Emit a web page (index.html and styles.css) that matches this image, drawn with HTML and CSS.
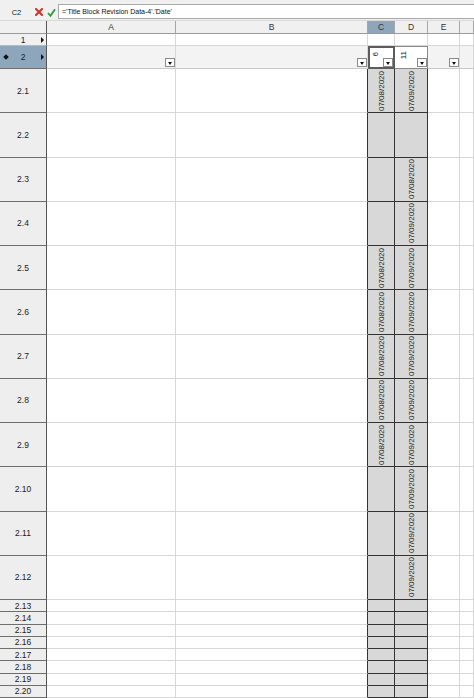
FILE: index.html
```html
<!DOCTYPE html>
<html>
<head>
<meta charset="utf-8">
<link rel="stylesheet" href="styles.css">
</head>
<body>
<div class="topbar">
  <div class="namebox">C2</div>
  <svg class="ico ico-x" width="8" height="8" viewBox="0 0 8 8"><path d="M1 1L7 7M7 1L1 7" stroke="#d4312a" stroke-width="2" stroke-linecap="square"/></svg>
  <svg class="ico ico-ok" width="9" height="9" viewBox="0 0 9 9"><path d="M1 5L3.5 7.8L8 1.2" fill="none" stroke="#2f9a3a" stroke-width="1.8"/></svg>
  <div class="formula">='Title Block Revision Data-4'.'Date'</div>
</div>
<div class="sheet">
  <div class="row hdr">
    <div class="rh corner"></div>
    <div class="ch">A</div><div class="ch">B</div><div class="ch sel">C</div><div class="ch">D</div><div class="ch">E</div><div class="ch"></div>
  </div>
  <div class="row r1">
    <div class="rh rh-top"><span></span><span class="n">1</span><span class="tri"></span></div>
    <div class="c"></div><div class="c"></div><div class="c"></div><div class="c"></div><div class="c"></div><div class="c"></div>
  </div>
  <div class="row r2">
    <div class="rh rh-top rh-sel"><span class="dot"></span><span class="n">2</span><span class="tri"></span></div>
    <div class="c fc"><span class="dd"></span></div>
    <div class="c fc"><span class="dd"></span></div>
    <div class="c fc c2"><span class="vt">6</span><span class="dd"></span></div>
    <div class="c fc d2"><span class="vt">11</span><span class="dd"></span></div>
    <div class="c fc"><span class="dd"></span></div>
    <div class="c fc"></div>
  </div>

  <div class="row big"><div class="rh rh-lbl">2.1</div><div class="c"></div><div class="c bk"></div><div class="c k"><span class="vt">07/08/2020</span></div><div class="c k"><span class="vt">07/09/2020</span></div><div class="c"></div><div class="c"></div></div>
  <div class="row big"><div class="rh rh-lbl">2.2</div><div class="c"></div><div class="c bk"></div><div class="c k"></div><div class="c k"></div><div class="c"></div><div class="c"></div></div>
  <div class="row big"><div class="rh rh-lbl">2.3</div><div class="c"></div><div class="c bk"></div><div class="c k"></div><div class="c k"><span class="vt">07/08/2020</span></div><div class="c"></div><div class="c"></div></div>
  <div class="row big"><div class="rh rh-lbl">2.4</div><div class="c"></div><div class="c bk"></div><div class="c k"></div><div class="c k"><span class="vt">07/09/2020</span></div><div class="c"></div><div class="c"></div></div>
  <div class="row big"><div class="rh rh-lbl">2.5</div><div class="c"></div><div class="c bk"></div><div class="c k"><span class="vt">07/08/2020</span></div><div class="c k"><span class="vt">07/09/2020</span></div><div class="c"></div><div class="c"></div></div>
  <div class="row big"><div class="rh rh-lbl">2.6</div><div class="c"></div><div class="c bk"></div><div class="c k"><span class="vt">07/08/2020</span></div><div class="c k"><span class="vt">07/09/2020</span></div><div class="c"></div><div class="c"></div></div>
  <div class="row big"><div class="rh rh-lbl">2.7</div><div class="c"></div><div class="c bk"></div><div class="c k"><span class="vt">07/08/2020</span></div><div class="c k"><span class="vt">07/09/2020</span></div><div class="c"></div><div class="c"></div></div>
  <div class="row big"><div class="rh rh-lbl">2.8</div><div class="c"></div><div class="c bk"></div><div class="c k"><span class="vt">07/08/2020</span></div><div class="c k"><span class="vt">07/09/2020</span></div><div class="c"></div><div class="c"></div></div>
  <div class="row big"><div class="rh rh-lbl">2.9</div><div class="c"></div><div class="c bk"></div><div class="c k"><span class="vt">07/08/2020</span></div><div class="c k"><span class="vt">07/09/2020</span></div><div class="c"></div><div class="c"></div></div>
  <div class="row big"><div class="rh rh-lbl">2.10</div><div class="c"></div><div class="c bk"></div><div class="c k"></div><div class="c k"><span class="vt">07/09/2020</span></div><div class="c"></div><div class="c"></div></div>
  <div class="row big"><div class="rh rh-lbl">2.11</div><div class="c"></div><div class="c bk"></div><div class="c k"></div><div class="c k"><span class="vt">07/09/2020</span></div><div class="c"></div><div class="c"></div></div>
  <div class="row big"><div class="rh rh-lbl">2.12</div><div class="c"></div><div class="c bk"></div><div class="c k"></div><div class="c k"><span class="vt">07/09/2020</span></div><div class="c"></div><div class="c"></div></div>

  <div class="row small"><div class="rh rh-lbl">2.13</div><div class="c"></div><div class="c bk"></div><div class="c k"></div><div class="c k"></div><div class="c"></div><div class="c"></div></div>
  <div class="row small"><div class="rh rh-lbl">2.14</div><div class="c"></div><div class="c bk"></div><div class="c k"></div><div class="c k"></div><div class="c"></div><div class="c"></div></div>
  <div class="row small"><div class="rh rh-lbl">2.15</div><div class="c"></div><div class="c bk"></div><div class="c k"></div><div class="c k"></div><div class="c"></div><div class="c"></div></div>
  <div class="row small"><div class="rh rh-lbl">2.16</div><div class="c"></div><div class="c bk"></div><div class="c k"></div><div class="c k"></div><div class="c"></div><div class="c"></div></div>
  <div class="row small"><div class="rh rh-lbl">2.17</div><div class="c"></div><div class="c bk"></div><div class="c k"></div><div class="c k"></div><div class="c"></div><div class="c"></div></div>
  <div class="row small"><div class="rh rh-lbl">2.18</div><div class="c"></div><div class="c bk"></div><div class="c k"></div><div class="c k"></div><div class="c"></div><div class="c"></div></div>
  <div class="row small"><div class="rh rh-lbl">2.19</div><div class="c"></div><div class="c bk"></div><div class="c k"></div><div class="c k"></div><div class="c"></div><div class="c"></div></div>
  <div class="row small"><div class="rh rh-lbl">2.20</div><div class="c"></div><div class="c bk"></div><div class="c k"></div><div class="c k"></div><div class="c"></div><div class="c"></div></div>
</div>
</body>
</html>
```

FILE: styles.css
```css
* { box-sizing: border-box; margin: 0; padding: 0; }
html, body { width: 474px; height: 698px; overflow: hidden; background: #fff; }
body { font-family: "Liberation Sans", Arial, sans-serif; color: #222; }

.topbar {
  display: flex;
  align-items: center;
  height: 21px;
  padding: 4px 0 1px;
  background: #f0f0f0;
  border-bottom: 1px solid #d9d9d9;
}
.namebox { width: 33px; text-align: center; font-size: 7.5px; color: #222; margin-top: 1px; }
.ico { flex: none; margin-top: 1px; }
.ico-x { margin-left: 2px; }
.ico-ok { margin-left: 4px; }
.formula {
  flex: 1;
  margin-left: 2px;
  height: 15px;
  background: #fff;
  border: 1px solid #a9a9a9;
  border-right: 0;
  font-size: 7px;
  line-height: 13px;
  padding-left: 3px;
  color: #111;
  white-space: nowrap;
}

.row {
  display: grid;
  grid-template-columns: 47px 129px 192px 27px 33px 32px 1fr;
}
.hdr { height: 13px; }
.r1 { height: 12px; }
.r2 { height: 23px; }
.big { height: 44.25px; }
.small { height: 12.25px; }

.rh {
  background: #eeeeee;
  border-right: 1px solid #555;
  border-bottom: 1px solid #6e6e6e;
  font-size: 8.5px;
  color: #222;
}
.corner { background: #f0f0f0; border-bottom-color: #9a9a9a; }
.rh-top {
  display: grid;
  grid-template-columns: 10px 1fr 10px;
  align-items: center;
  background: #f0f0f0;
  border-bottom-color: #b8b8b8;
}
.rh-top .n { text-align: center; }
.rh-sel { background: #8ea6bb; border-bottom-color: #6e6e6e; }
.tri {
  justify-self: end;
  margin-right: 2px;
  width: 0; height: 0;
  border-left: 3px solid #111;
  border-top: 3px solid transparent;
  border-bottom: 3px solid transparent;
}
.dot {
  justify-self: center;
  margin-left: 1px;
  width: 4px; height: 4px;
  transform: rotate(45deg);
  background: #111;
}
.rh-lbl { display: flex; align-items: center; justify-content: center; }

.ch {
  background: #f0f0f0;
  border-right: 1px solid #a6a6a6;
  border-bottom: 1px solid #9a9a9a;
  font-size: 8.5px;
  line-height: 12px;
  text-align: center;
  color: #333;
}
.ch.sel { background: #8ea6bb; }

.c {
  border-right: 1px solid #d7d7d7;
  border-bottom: 1px solid #d7d7d7;
}
.r2 .c { background: #f3f3f3; border-bottom-color: #c8c8c8; }
.fc {
  display: flex;
  justify-content: flex-end;
  align-items: flex-end;
  padding-bottom: 1px;
}
.dd {
  position: relative;
  width: 10px;
  height: 9px;
  background: #fff;
  border: 1px solid #8a8a8a;
}
.dd::after {
  content: "";
  position: absolute;
  left: 2px; top: 2.5px;
  border-top: 3px solid #111;
  border-left: 2.5px solid transparent;
  border-right: 2.5px solid transparent;
}

.r2 .c2, .r2 .d2 {
  position: relative;
  background: #fff;
  justify-content: space-between;
  padding: 6px 1px 1px 3px;
}
.r2 .d2 {
  padding: 5px 0 1px 4px;
  border-right-color: #8a8a8a;
  border-bottom-color: #8a8a8a;
  box-shadow: inset 0 1px 0 #8a8a8a;
}
.c2::before {
  content: "";
  position: absolute;
  top: 0; left: 0; right: -1px; bottom: -1px;
  border: 2px solid #5c5c5c;
  pointer-events: none;
}
.c2 .vt, .d2 .vt { align-self: flex-start; }

.vt {
  writing-mode: vertical-rl;
  transform: rotate(180deg);
  font-size: 8px;
  line-height: 9px;
  color: #222;
  white-space: nowrap;
}

.bk { border-right-color: #333; }
.k {
  background: #d8d8d8;
  border-right-color: #333;
  border-bottom-color: #333;
  display: flex;
  align-items: center;
  justify-content: center;
}
```
